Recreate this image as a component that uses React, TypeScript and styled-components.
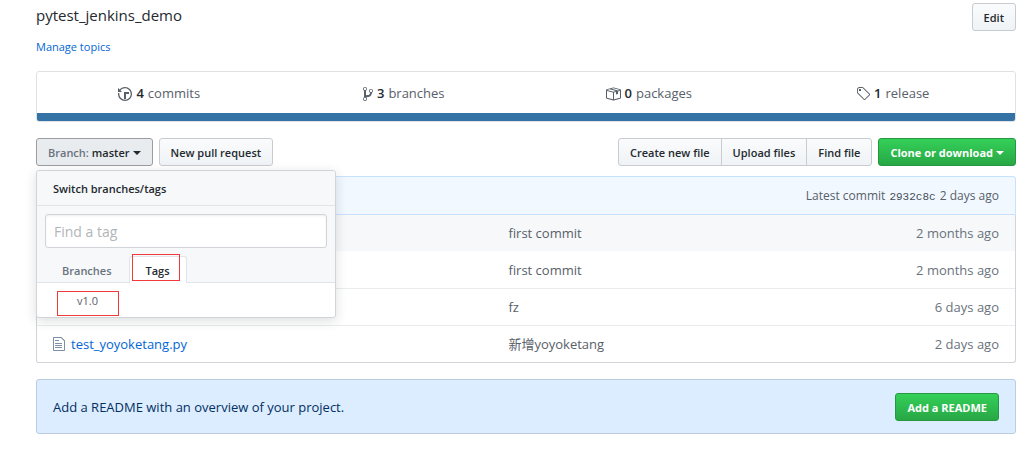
import React, { useState } from "react";
import styled, { createGlobalStyle, css } from "styled-components";

const GlobalStyle = createGlobalStyle`
  *, *::before, *::after { box-sizing: border-box; }
  body {
    margin: 0;
    background: #fff;
    color: #24292e;
    font-family: "Open Sans", "Noto Sans", "Noto Sans CJK SC", sans-serif;
    font-size: 13px;
    line-height: 20px;
  }
  button, input { font-family: inherit; }
`;

const Page = styled.main`
  padding: 3px 9px 24px 36px;
`;

const RepoHead = styled.header`
  display: flex;
  justify-content: space-between;
  align-items: flex-start;
`;

const Description = styled.p`
  margin: 0;
  font-size: 15px;
  line-height: 24px;
`;

const Link = styled.a`
  color: #0366d6;
  text-decoration: none;
  &:hover { text-decoration: underline; }
`;

const TopicsLink = styled(Link)`
  display: block;
  width: max-content;
  margin-top: 10px;
  font-size: 11px;
  line-height: 20px;
`;

const buttonSkins = {
  plain: css`
    color: #24292e;
    border-color: #c8cbcf;
    background: linear-gradient(#fafbfc, #eff3f6);
  `,
  pressed: css`
    color: #24292e;
    border-color: #9a9ea2;
    background: #e9ecef;
  `,
  primary: css`
    color: #fff;
    border-color: #269840;
    background: linear-gradient(#34d058, #28a745);
    font-weight: 700;
  `,
};

const Button = styled.button<{ $skin?: keyof typeof buttonSkins }>`
  display: inline-flex;
  align-items: center;
  justify-content: center;
  gap: 3px;
  height: 28px;
  padding: 2px 11px 0;
  border: 1px solid;
  border-radius: 3px;
  font-size: 11px;
  font-weight: 600;
  line-height: 20px;
  white-space: nowrap;
  cursor: pointer;
  ${({ $skin = "plain" }) => buttonSkins[$skin]}
`;

const Muted = styled.span`
  color: #6a737d;
`;

const Caret = styled.span`
  border: 4px solid transparent;
  border-top-color: currentColor;
  border-bottom: 0;
`;

const Summary = styled.section`
  margin-top: 14px;
  border: 1px solid #dfe2e5;
  border-radius: 3px;
  overflow: hidden;
`;

const Stats = styled.ul`
  display: grid;
  grid-template-columns: repeat(4, 1fr);
  margin: 0;
  padding: 0;
  list-style: none;
`;

const Stat = styled.li`
  display: flex;
  align-items: center;
  justify-content: center;
  gap: 4px;
  height: 41px;
  padding-top: 2px;
  color: #586069;
`;

const StatLabel = styled.span`
  padding-bottom: 2px;
`;

const Count = styled(StatLabel)`
  color: #24292e;
  font-weight: 600;
`;

const LanguageBar = styled.div`
  height: 8px;
  background: #3572a5;
`;

const Toolbar = styled.nav`
  display: flex;
  gap: 6px;
  margin: 16px 0 10px;
`;

const ToolbarEnd = styled.div`
  display: flex;
  gap: 6px;
  margin-left: auto;
`;

const ButtonGroup = styled.div`
  display: flex;
  ${Button} + ${Button} { margin-left: -1px; }
  ${Button}:not(:first-child) { border-top-left-radius: 0; border-bottom-left-radius: 0; }
  ${Button}:not(:last-child) { border-top-right-radius: 0; border-bottom-right-radius: 0; }
`;

const MenuAnchor = styled.div`
  position: relative;
`;

const Menu = styled.div`
  position: absolute;
  z-index: 10;
  top: 32px;
  left: 0;
  width: 300px;
  border: 1px solid #d1d5da;
  border-radius: 3px;
  background: #fff;
  box-shadow: 0 3px 12px rgba(27, 31, 35, 0.15);
`;

const MenuTitle = styled.h2`
  margin: 0;
  padding: 8px 16px 6px;
  border-bottom: 1px solid #e1e4e8;
  border-radius: 3px 3px 0 0;
  background: #f6f8fa;
  font-size: 11px;
  font-weight: 600;
  line-height: 20px;
`;

const Filters = styled.div`
  padding: 8px 8px 0;
  border-bottom: 1px solid #e1e4e8;
  background: #f6f8fa;
`;

const FilterInput = styled.input`
  display: block;
  width: 100%;
  height: 34px;
  padding: 0 8px;
  border: 1px solid #d1d5da;
  border-radius: 3px;
  background: #fff;
  box-shadow: inset 0 1px 2px rgba(27, 31, 35, 0.075);
  color: #24292e;
  font-size: 14px;
  &::placeholder { color: #b1b5ba; opacity: 1; }
`;

const TabList = styled.div`
  display: flex;
  margin: 8px 0 -1px;
`;

const Tab = styled.button<{ $active: boolean }>`
  position: relative;
  height: 27px;
  padding: 2px 16px 0;
  border: 1px solid transparent;
  border-bottom: 0;
  border-radius: 3px 3px 0 0;
  background: transparent;
  color: #6a737d;
  font-size: 11px;
  font-weight: 600;
  line-height: 20px;
  cursor: pointer;
  ${({ $active }) =>
    $active &&
    css`
      border-color: #e1e4e8;
      background: #fff;
      color: #24292e;
    `}
`;

const Mark = styled.span`
  position: absolute;
  border: 1px solid #f13a3a;
  pointer-events: none;
`;

const TabMark = styled(Mark)`
  inset: -3px 6px 2px 2px;
`;

const TagMark = styled(Mark)`
  top: 8px;
  left: 20px;
  width: 62px;
  height: 25px;
`;

const TagItem = styled(Link)`
  position: relative;
  display: block;
  padding: 8px 40px 6px;
  color: #586069;
  font-size: 11px;
  line-height: 20px;
`;

const CommitBar = styled.div`
  height: 39px;
  padding: 0 16px;
  border: 1px solid #c8e1ff;
  border-radius: 3px 3px 0 0;
  background: #f1f8ff;
  color: #586069;
  font-size: 12px;
  line-height: 37px;
  text-align: right;
`;

const Sha = styled.a`
  margin: 0 1px;
  color: #444d56;
  font-family: "Liberation Mono", monospace;
  font-size: 11px;
  text-decoration: none;
`;

const FilesFrame = styled.div`
  border: 1px solid #d1d5da;
  border-top: 0;
  border-radius: 0 0 3px 3px;
`;

const Cell = styled.td<{ $width: string }>`
  width: ${({ $width }) => $width};
  height: 37px;
  padding: 0 2px;
  color: #586069;
  line-height: 20px;
`;

const NameCell = styled(Cell)`
  padding-left: 16px;
`;

const AgeCell = styled(Cell)`
  padding-right: 16px;
  color: #6a737d;
  text-align: right;
`;

const FileRow = styled.tr<{ $highlighted?: boolean }>`
  background: ${({ $highlighted }) => ($highlighted ? "#f6f8fa" : "transparent")};
  &:first-child td { height: 36px; }
  & + & td { border-top: 1px solid #eaecef; }
`;

const Files = styled.table`
  width: 100%;
  border-collapse: separate;
  border-spacing: 0;
  table-layout: fixed;
`;

const FileName = styled.span`
  display: flex;
  align-items: center;
  gap: 6px;
`;

const Readme = styled.section`
  display: flex;
  align-items: center;
  justify-content: space-between;
  height: 55px;
  margin-top: 16px;
  padding: 0 16px;
  border: 1px solid #b9cce2;
  border-radius: 3px;
  background: #dbedff;
  color: #032f62;
`;

type IconName = "history" | "branch" | "package" | "tag" | "file";

const icons: Record<IconName, { width: number; d: string }> = {
  history: {
    width: 14,
    d: "M8 13H6V6h5v2H8v5zM7 1C4.81 1 2.87 2.02 1.59 3.59L0 2v4h4L2.5 4.5C3.55 3.17 5.17 2.3 7 2.3c3.14 0 5.7 2.56 5.7 5.7s-2.56 5.7-5.7 5.7A5.71 5.71 0 0 1 1.3 8c0-.34.03-.67.09-1H.08C.03 7.33 0 7.66 0 8c0 3.86 3.14 7 7 7s7-3.14 7-7-3.14-7-7-7z",
  },
  branch: {
    width: 10,
    d: "M10 5c0-1.11-.89-2-2-2a1.993 1.993 0 0 0-1 3.72v.3c-.02.52-.23.98-.63 1.38-.4.4-.86.61-1.38.63-.83.02-1.48.16-2 .45V4.72a1.993 1.993 0 0 0-1-3.72C.88 1 0 1.89 0 3a2 2 0 0 0 1 1.72v6.56c-.59.35-1 .99-1 1.72 0 1.11.89 2 2 2 1.11 0 2-.89 2-2 0-.53-.2-1-.53-1.36.09-.06.48-.41.59-.47.25-.11.56-.17.94-.17 1.05-.05 1.95-.45 2.75-1.25S8.95 7.77 9 6.73h-.02C9.59 6.37 10 5.73 10 5zM2 1.8c.66 0 1.2.55 1.2 1.2 0 .65-.55 1.2-1.2 1.2C1.35 4.2.8 3.65.8 3c0-.65.55-1.2 1.2-1.2zm0 12.41c-.66 0-1.2-.55-1.2-1.2 0-.65.55-1.2 1.2-1.2.65 0 1.2.55 1.2 1.2 0 .65-.55 1.2-1.2 1.2zm6-8c-.66 0-1.2-.55-1.2-1.2 0-.65.55-1.2 1.2-1.2.65 0 1.2.55 1.2 1.2 0 .65-.55 1.2-1.2 1.2z",
  },
  package: {
    width: 16,
    d: "M1 4.27v7.47c0 .45.3.84.75.97l6.5 1.73c.16.05.34.05.5 0l6.5-1.73c.45-.13.75-.52.75-.97V4.27c0-.45-.3-.84-.75-.97l-6.5-1.74a1.4 1.4 0 0 0-.5 0L1.75 3.3c-.45.13-.75.52-.75.97zm7 9.09l-6-1.59V5l6 1.61v6.75zM2 4l2.5-.67L11 5.06l-2.5.67L2 4zm13 7.77l-6 1.59V6.61l2-.55V8.5l2-.53V5.53L15 5v6.77zm-2-7.24L6.5 2.8l2-.53L15 4l-2 .53z",
  },
  tag: {
    width: 14,
    d: "M7.73 1.73C7.26 1.26 6.62 1 5.96 1H3.5C2.13 1 1 2.13 1 3.5v2.47c0 .66.27 1.3.73 1.77l6.06 6.06c.39.39 1.02.39 1.41 0l4.59-4.59a.996.996 0 0 0 0-1.41L7.73 1.73zM2.38 7.09c-.31-.3-.47-.7-.47-1.13V3.5c0-.88.72-1.59 1.59-1.59h2.47c.42 0 .83.16 1.13.47l6.14 6.13-4.73 4.73-6.13-6.15zM3.01 3h2v2H3V3h.01z",
  },
  file: {
    width: 12,
    d: "M6 5H2V4h4v1zM2 8h7V7H2v1zm0 2h7V9H2v1zm0 2h7v-1H2v1zm10-7.5V14c0 .55-.45 1-1 1H1c-.55 0-1-.45-1-1V2c0-.55.45-1 1-1h7.5L12 4.5zM11 5L8 2H1v12h10V5z",
  },
};

const IconSvg = styled.svg<{ $tone?: string }>`
  flex: none;
  fill: ${({ $tone }) => $tone ?? "currentColor"};
`;

function Icon({ name, tone }: { name: IconName; tone?: string }) {
  const { width, d } = icons[name];
  return (
    <IconSvg $tone={tone} width={width} height={16} viewBox={`0 0 ${width} 16`} aria-hidden="true">
      <path fillRule="evenodd" d={d} />
    </IconSvg>
  );
}

const stats: { icon: IconName; count: number; label: string }[] = [
  { icon: "history", count: 4, label: "commits" },
  { icon: "branch", count: 3, label: "branches" },
  { icon: "package", count: 0, label: "packages" },
  { icon: "tag", count: 1, label: "release" },
];

const files = [
  { name: "", message: "first commit", age: "2 months ago", highlighted: true },
  { name: "", message: "first commit", age: "2 months ago" },
  { name: "", message: "fz", age: "6 days ago" },
  { name: "test_yoyoketang.py", message: "新增yoyoketang", age: "2 days ago" },
];

export default function App() {
  const [query, setQuery] = useState("");

  return (
    <>
      <GlobalStyle />
      <Page>
        <RepoHead>
          <div>
            <Description>pytest_jenkins_demo</Description>
            <TopicsLink href="#topics">Manage topics</TopicsLink>
          </div>
          <Button type="button">Edit</Button>
        </RepoHead>

        <Summary>
          <Stats>
            {stats.map(({ icon, count, label }) => (
              <Stat key={label}>
                <Icon name={icon} />
                <Count>{count}</Count>
                <StatLabel>{label}</StatLabel>
              </Stat>
            ))}
          </Stats>
          <LanguageBar />
        </Summary>

        <Toolbar>
          <MenuAnchor>
            <Button type="button" $skin="pressed" aria-expanded="true">
              <Muted>Branch:</Muted>
              <span>master</span>
              <Caret />
            </Button>
            <Menu>
              <MenuTitle>Switch branches/tags</MenuTitle>
              <Filters>
                <FilterInput
                  aria-label="Find a tag"
                  placeholder="Find a tag"
                  value={query}
                  onChange={(e) => setQuery(e.target.value)}
                />
                <TabList role="tablist">
                  <Tab type="button" role="tab" aria-selected={false} $active={false}>
                    Branches
                  </Tab>
                  <Tab type="button" role="tab" aria-selected $active>
                    Tags
                    <TabMark />
                  </Tab>
                </TabList>
              </Filters>
              <TagItem href="#v1.0">
                v1.0
                <TagMark />
              </TagItem>
            </Menu>
          </MenuAnchor>
          <Button type="button">New pull request</Button>
          <ToolbarEnd>
            <ButtonGroup>
              <Button type="button">Create new file</Button>
              <Button type="button">Upload files</Button>
              <Button type="button">Find file</Button>
            </ButtonGroup>
            <Button type="button" $skin="primary">
              Clone or download
              <Caret />
            </Button>
          </ToolbarEnd>
        </Toolbar>

        <CommitBar>
          Latest commit <Sha href="#commit">2932c8c</Sha> 2 days ago
        </CommitBar>
        <FilesFrame>
          <Files>
            <tbody>
              {files.map(({ name, message, age, highlighted }, i) => (
                <FileRow key={i} $highlighted={highlighted}>
                  <NameCell $width="48%">
                    {name && (
                      <FileName>
                        <Icon name="file" tone="#7e8ea6" />
                        <Link href="#file">{name}</Link>
                      </FileName>
                    )}
                  </NameCell>
                  <Cell $width="32%">{message}</Cell>
                  <AgeCell $width="20%">{age}</AgeCell>
                </FileRow>
              ))}
            </tbody>
          </Files>
        </FilesFrame>

        <Readme>
          <span>Add a README with an overview of your project.</span>
          <Button type="button" $skin="primary">Add a README</Button>
        </Readme>
      </Page>
    </>
  );
}
